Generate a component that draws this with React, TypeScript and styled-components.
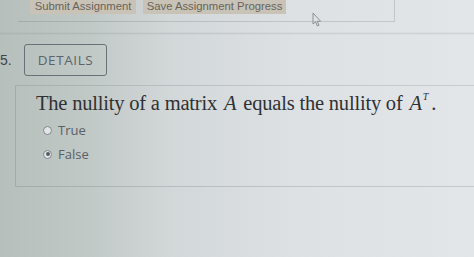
import React from "react";
import styled, { createGlobalStyle } from "styled-components";

const Global = createGlobalStyle`
  html, body { margin: 0; padding: 0; }
  body {
    width: 474px; height: 257px; overflow: hidden;
    background: linear-gradient(90deg, #b6bfbc 0px, #c1c9c7 90px, #d2d7d8 170px, #dde1e4 300px, #e3e6e9 474px);
    font-family: "Liberation Sans", Arial, sans-serif;
  }
`;

const Page = styled.div`
  position: relative;
  display: flex;
  flex-direction: column;
  width: 474px;
  height: 257px;
`;

const TopPanel = styled.div`
  margin-left: 18px;
  width: 377px;
  height: 22px;
  box-sizing: border-box;
  border-right: 1px solid rgba(90, 100, 100, 0.22);
  border-bottom: 1px solid rgba(90, 100, 100, 0.22);
  display: flex;
  align-items: flex-start;
  gap: 7px;
  padding-left: 12px;
`;

const Button = styled.div<{ $w: number }>`
  width: ${(p) => p.$w}px;
  height: 15px;
  margin-top: -1px;
  background: #c8c3b6;
  color: #68645c;
  font-size: 11.3px;
  line-height: 15px;
  text-align: center;
  white-space: nowrap;
`;

const Band = styled.div`
  margin-top: 10px;
  height: 3px;
  background: linear-gradient(180deg, rgba(120,130,130,0.0), rgba(120,130,130,0.18), rgba(120,130,130,0.0));
`;

const HeaderRow = styled.div`
  display: flex;
  align-items: center;
  margin-top: 8px;
  height: 33px;
`;

const QNumber = styled.div`
  width: 21px;
  font-size: 14px;
  color: #3e4448;
`;

const Details = styled.div`
  width: 83px;
  height: 32px;
  box-sizing: border-box;
  border: 1.5px solid #6a7176;
  border-radius: 3px;
  display: flex;
  align-items: center;
  justify-content: center;
  font-family: "Open Sans", "Liberation Sans", sans-serif;
  font-size: 13.5px;
  letter-spacing: 0.6px;
  color: #5d646a;
  margin-left: 3px;
`;

const QuestionPanel = styled.div`
  margin-top: 9px;
  margin-left: 15px;
  height: 100px;
  border-top: 1px solid rgba(90, 100, 100, 0.2);
  border-left: 1px solid rgba(90, 100, 100, 0.22);
  border-bottom: 1px solid rgba(90, 100, 100, 0.22);
  padding-left: 20px;
  display: flex;
  flex-direction: column;
`;

const Prompt = styled.div`
  margin-top: 5px;
  font-family: "Liberation Serif", "Times New Roman", serif;
  font-size: 20.5px;
  letter-spacing: -0.2px;
  line-height: 24px;
  color: #2f3234;
  white-space: nowrap;
`;

const Var = styled.i<{ $end?: boolean }>`
  margin: 0 ${(p) => (p.$end ? 3 : 7)}px 0 7px;
`;

const Sup = styled.sup`
  font-size: 10px;
  font-style: italic;
  vertical-align: 10px;
  line-height: 0;
  margin-left: 1px;
`;

const Options = styled.div`
  margin-top: 6px;
  display: flex;
  flex-direction: column;
  gap: 6px;
  padding-left: 7px;
`;

const Option = styled.div`
  display: flex;
  align-items: center;
  gap: 6px;
  height: 18px;
  font-family: "Open Sans", "Liberation Sans", sans-serif;
  font-size: 13px;
  color: #5a6064;
`;

const Radio = styled.span<{ $checked?: boolean }>`
  width: 9px;
  height: 9px;
  box-sizing: border-box;
  border-radius: 50%;
  border: 1px solid #7f878b;
  background: #e2e5e6;
  display: flex;
  align-items: center;
  justify-content: center;
  &::after {
    content: "";
    display: ${(p) => (p.$checked ? "block" : "none")};
    width: 4px;
    height: 4px;
    border-radius: 50%;
    background: #565d61;
  }
`;

const Cursor = styled.svg`
  position: absolute;
  left: 312px;
  top: 12px;
`;

export default function App() {
  return (
    <Page>
      <Global />
      <TopPanel>
        <Button $w={106}>Submit Assignment</Button>
        <Button $w={143}>Save Assignment Progress</Button>
      </TopPanel>
      <Band />
      <HeaderRow>
        <QNumber>5.</QNumber>
        <Details>DETAILS</Details>
      </HeaderRow>
      <QuestionPanel>
        <Prompt>
          The nullity of a matrix<Var>A</Var>equals the nullity of<Var $end>
            A<Sup>T</Sup>
          </Var>.
        </Prompt>
        <Options>
          <Option>
            <Radio />
            True
          </Option>
          <Option>
            <Radio $checked />
            False
          </Option>
        </Options>
      </QuestionPanel>
      <Cursor width="12" height="16" viewBox="0 0 12 16">
        <path d="M1 1 L1 12 L3.5 9.8 L5.4 14 L7 13.3 L5.2 9.3 L8.6 9.2 Z" fill="none" stroke="#8a9194" strokeWidth="1" strokeLinejoin="round" />
      </Cursor>
    </Page>
  );
}
